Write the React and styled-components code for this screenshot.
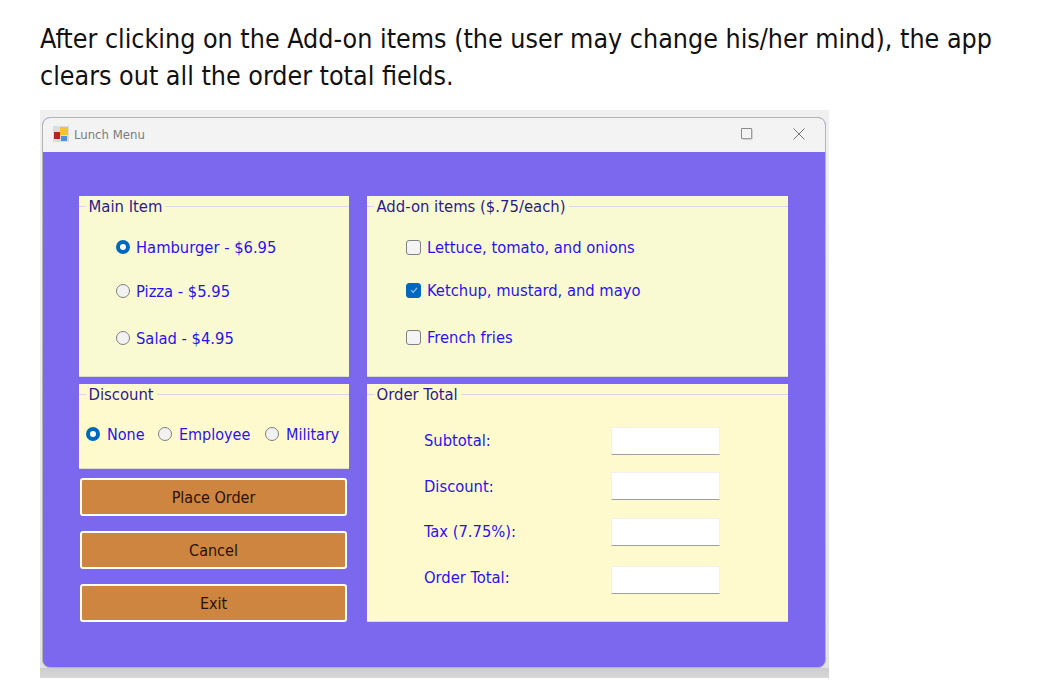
import styled, { createGlobalStyle } from 'styled-components';

const Global = createGlobalStyle`
  html, body {
    margin: 0;
    padding: 0;
    background: #fff;
    overflow: hidden;
  }
`
const uiFont = `"DejaVu Sans Condensed", "DejaVu Sans", sans-serif`

const Page = styled.div`
  width: 1047px;
  height: 687px;
  padding: 21px 0 0 40px;
  box-sizing: border-box;
  font-family: ${uiFont};
`
const Intro = styled.p`
  margin: 0 0 16px;
  width: 990px;
  font-size: 26.6px;
  line-height: 36.5px;
  color: #111;
`
const Shot = styled.div`
  width: 789px;
  height: 568px;
  box-sizing: border-box;
  padding: 7px 3px 10px 2px;
  background: linear-gradient(to bottom, #f0f0f0 0, #e2e2e2 calc(100% - 10px), #cdcdcd calc(100% - 10px), #d8d8d8 100%);
`
const Window = styled.div`
  height: 551px;
  box-sizing: border-box;
  display: flex;
  flex-direction: column;
  border: 1px solid #b4b4b4;
  border-radius: 8px;
  overflow: hidden;
  background: #7b68ee;
`
const TitleBar = styled.div`
  height: 34px;
  box-sizing: border-box;
  padding: 0 0 2px 10px;
  flex: none;
  display: flex;
  align-items: center;
  background: #f3f3f3;
`
const AppIcon = styled.svg`
  width: 16px;
  height: 16px;
  margin-right: 5px;
`
const TitleText = styled.span`
  flex: 1;
  font-size: 13px;
  color: #7c7c7c;
`
const CtrlButton = styled.svg`
  width: 12px;
  height: 12px;
  margin-right: ${p => p.$right}px;
`
const Client = styled.div`
  flex: 1;
  display: grid;
  grid-template-columns: 270px 421px;
  column-gap: 18px;
  align-items: start;
  padding: 44px 0 0 36px;
`
const Column = styled.div`
  display: flex;
  flex-direction: column;
  gap: 7px;
`
const Group = styled.div`
  height: ${p => p.$height}px;
  box-sizing: border-box;
  background: ${p => p.$bg};
  border-bottom: 1px solid #dcdcd0;
  display: flex;
  flex-direction: column;
`
const Legend = styled.div`
  display: flex;
  align-items: center;
  height: 20px;
  font-size: 16.5px;
  color: #2c1a8c;
  gap: 3px;
  &::before, &::after {
    content: "";
    height: 1px;
    background: #d8d8e4;
  }
  &::before { width: 6.5px; flex: none; }
  &::after { flex: 1; }
`
const Options = styled.div`
  display: flex;
  flex-direction: column;
  padding-left: ${p => p.$left}px;
`
const Option = styled.label`
  display: flex;
  align-items: center;
  gap: 6px;
  height: 20px;
  margin-top: ${p => p.$top}px;
  font-size: 16.4px;
  color: #2a12f0;
  white-space: nowrap;
`
const Radio = styled.span`
  width: 14px;
  height: 14px;
  flex: none;
  box-sizing: border-box;
  border-radius: 50%;
  border: ${p => (p.$on ? '4px solid #0067c0' : '1.5px solid #808080')};
  background: ${p => (p.$on ? '#fff' : '#f2f2f2')};
`
const Check = styled.span`
  width: 15px;
  height: 15px;
  flex: none;
  box-sizing: border-box;
  border-radius: 3px;
  border: 1.5px solid ${p => (p.$on ? '#0067c0' : '#808080')};
  background: ${p => (p.$on ? '#0067c0' : '#f4f4f4')};
  display: flex;
  align-items: center;
  justify-content: center;
`
const DiscountRow = styled.div`
  display: flex;
  margin: 20px 0 0 7px;
`
const DiscountOption = styled(Option)`
  margin-top: 0;
  gap: 7px;
  width: ${p => p.$width}px;
  font-size: 16px;
`
const Buttons = styled.div`
  display: flex;
  flex-direction: column;
  gap: 15px;
  margin: 2px 0 0 1px;
  width: 267px;
`
const OrderButton = styled.button`
  height: 38px;
  box-sizing: border-box;
  border: 2px solid #fff;
  border-radius: 3px;
  background: #cd853f;
  font-family: ${uiFont};
  font-size: 16px;
  color: #2a1208;
  padding: 0;
`
const TotalRows = styled.div`
  display: flex;
  flex-direction: column;
  padding-left: 57px;
`
const TotalRow = styled.div`
  display: flex;
  align-items: center;
  height: 28px;
  margin-top: ${p => p.$top}px;
`
const TotalLabel = styled.span`
  width: 187px;
  font-size: 16.4px;
  color: #2a12f0;
`
const TotalField = styled.div`
  width: 109px;
  height: 28px;
  box-sizing: border-box;
  margin-top: ${p => p.$drop}px;
  background: #fff;
  border: 1px solid #f1f1ee;
  border-bottom: 1px solid #a0a0a0;
`

const mains = [
  { label: 'Hamburger - $6.95', top: 21, on: true },
  { label: 'Pizza - $5.95', top: 24 },
  { label: 'Salad - $4.95', top: 27 },
]
const addons = [
  { label: 'Lettuce, tomato, and onions', top: 21 },
  { label: 'Ketchup, mustard, and mayo', top: 23, on: true },
  { label: 'French fries', top: 27 },
]
const discounts = [
  { label: 'None', width: 72, on: true },
  { label: 'Employee', width: 107 },
  { label: 'Military', width: 70 },
]
const totals = [
  { label: 'Subtotal:', top: 22, drop: 2 },
  { label: 'Discount:', top: 18, drop: 0 },
  { label: 'Tax (7.75%):', top: 17, drop: 2 },
  { label: 'Order Total:', top: 18, drop: 6 },
]

const App = () => {
  return (
    <Page>
      <Global />
      <Intro>
        After clicking on the Add-on items (the user may change his/her mind), the app clears out all the order total fields.
      </Intro>
      <Shot>
        <Window>
          <TitleBar>
            <AppIcon viewBox="0 0 16 16">
              <rect x="0" y="0" width="16" height="16" fill="#dcdcdc" />
              <rect x="1" y="6" width="6" height="7" fill="#b8222a" />
              <rect x="7" y="1" width="8" height="8" fill="#f4c430" />
              <rect x="8" y="10" width="6" height="5" fill="#4f8fdc" />
            </AppIcon>
            <TitleText>Lunch Menu</TitleText>
            <CtrlButton $right={40} viewBox="0 0 12 12">
              <path d="M0.5 0.5H10.5V10.5H0.5Z" fill="none" stroke="#8a8a8a" strokeWidth="1" />
              <path d="M11 1.5V11H1.5" fill="none" stroke="#b0b0b0" strokeWidth="1" />
            </CtrlButton>
            <CtrlButton $right={20} viewBox="0 0 12 12">
              <path d="M0.5 0.5L11.5 11.5M11.5 0.5L0.5 11.5" stroke="#777" strokeWidth="1" />
            </CtrlButton>
          </TitleBar>
          <Client>
            <Column>
              <Group $height={181} $bg="#fafad2">
                <Legend>Main Item</Legend>
                <Options $left={37}>
                  {mains.map(m => (
                    <Option key={m.label} $top={m.top}>
                      <Radio $on={m.on} />
                      {m.label}
                    </Option>
                  ))}
                </Options>
              </Group>
              <Group $height={85} $bg="#fffacd">
                <Legend>Discount</Legend>
                <DiscountRow>
                  {discounts.map(d => (
                    <DiscountOption key={d.label} $width={d.width}>
                      <Radio $on={d.on} />
                      {d.label}
                    </DiscountOption>
                  ))}
                </DiscountRow>
              </Group>
              <Buttons>
                <OrderButton>Place Order</OrderButton>
                <OrderButton>Cancel</OrderButton>
                <OrderButton>Exit</OrderButton>
              </Buttons>
            </Column>
            <Column>
              <Group $height={181} $bg="#fafad2">
                <Legend>Add-on items ($.75/each)</Legend>
                <Options $left={39}>
                  {addons.map(a => (
                    <Option key={a.label} $top={a.top}>
                      <Check $on={a.on}>
                        {a.on && (
                          <svg width="10" height="10" viewBox="0 0 10 10">
                            <path d="M2 5.2L4.2 7.4L8 2.8" fill="none" stroke="#9cc3e8" strokeWidth="1.2" />
                          </svg>
                        )}
                      </Check>
                      {a.label}
                    </Option>
                  ))}
                </Options>
              </Group>
              <Group $height={238} $bg="#fffacd">
                <Legend>Order Total</Legend>
                <TotalRows>
                  {totals.map(t => (
                    <TotalRow key={t.label} $top={t.top}>
                      <TotalLabel>{t.label}</TotalLabel>
                      <TotalField $drop={t.drop} />
                    </TotalRow>
                  ))}
                </TotalRows>
              </Group>
            </Column>
          </Client>
        </Window>
      </Shot>
    </Page>
  )
};

export default App;
